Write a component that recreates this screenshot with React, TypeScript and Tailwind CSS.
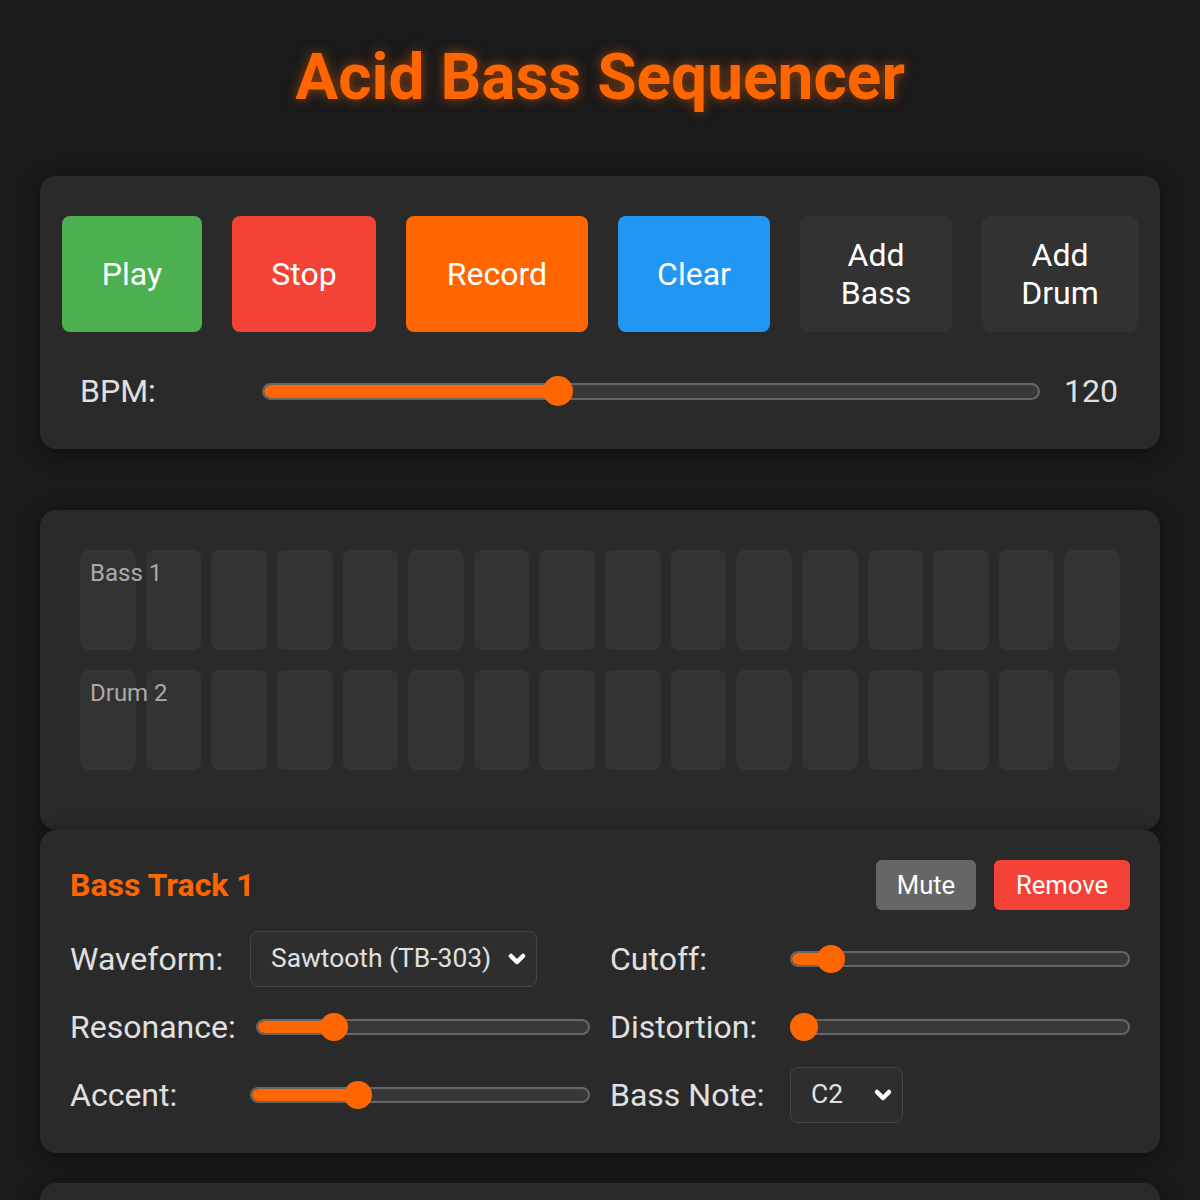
import { ChevronDown } from "lucide-react";

type SliderProps = { value: number; big?: boolean; className?: string };

// custom range look: grey outlined track, orange fill, orange knob
function Slider({ value, big = false, className = "" }: SliderProps) {
  const d = big ? 30 : 28;
  return (
    <div className={`relative flex items-center h-[30px] ${className}`}>
      <div
        className={`w-full rounded-full border-2 border-[#666] bg-[#383838] overflow-hidden ${
          big ? "h-[17px]" : "h-[16px]"
        }`}
      >
        <div
          className="h-full rounded-full bg-[#ff6600]"
          style={{ width: `calc(${value} * (100% - ${d}px) + ${d / 2}px)` }}
        />
      </div>
      <div
        className={`absolute top-1/2 -translate-y-1/2 rounded-full bg-[#ff6600] ${
          big ? "w-[30px] h-[30px]" : "w-[28px] h-[28px]"
        }`}
        style={{ left: `calc(${value} * (100% - ${d}px))` }}
      />
    </div>
  );
}

function FakeSelect({ label, width }: { label: string; width: string }) {
  return (
    <div
      className={`relative h-[56px] ${width} shrink-0 flex items-center rounded-lg border border-[#444] bg-[#2e2e2e] pl-[20px] text-[26.4px] text-[#e0e0e0]`}
    >
      {label}
      <ChevronDown className="absolute right-[7px] h-[24px] w-[24px] text-white" strokeWidth={4.5} />
    </div>
  );
}

function Control({ label, children }: { label: string; children: React.ReactNode }) {
  return (
    <div className="flex items-center gap-[20px]">
      <span className="min-w-[160px] whitespace-nowrap text-[32px] leading-[40px] text-[#e0e0e0]">{label}</span>
      {children}
    </div>
  );
}

const transport = [
  { label: "Play", w: "w-[140px]", bg: "bg-[#4caf50]" },
  { label: "Stop", w: "w-[144px]", bg: "bg-[#f44336]" },
  { label: "Record", w: "w-[182px]", bg: "bg-[#ff6600]" },
  { label: "Clear", w: "w-[152px]", bg: "bg-[#2196f3]" },
  { label: "Add Bass", w: "w-[152px]", bg: "bg-[#323232]" },
  { label: "Add Drum", w: "w-[156px]", bg: "bg-[#323232]" },
];

const rows = ["Bass 1", "Drum 2"];
const steps = Array.from({ length: 16 }, (_, i) => i);

export default function App() {
  return (
    <div className="min-h-screen bg-[#1a1a1a] px-[40px] pt-[40px] pb-[40px] font-[Roboto,sans-serif] text-[#e0e0e0]">
      <h1 className="mb-[61px] text-center text-[64px] font-bold leading-[75px] text-[#ff6600] [text-shadow:0_0_12px_rgba(255,102,0,0.55)]">
        Acid Bass Sequencer
      </h1>

      {/* Transport */}
      <div className="rounded-2xl bg-[#2a2a2a] px-[22px] pt-[40px] pb-[39px] shadow-[0_4px_20px_rgba(0,0,0,0.45)]">
        <div className="flex gap-[30px]">
          {transport.map((b) => (
            <button
              key={b.label}
              className={`${b.w} ${b.bg} rounded-lg px-[24px] py-[20px] text-[32px] leading-[38px] text-white`}
            >
              {b.label}
            </button>
          ))}
        </div>
        <div className="mt-[40px] flex h-[38px] items-center gap-[20px] pl-[18px] pr-[20px]">
          <span className="w-[162px] text-[32px]">BPM:</span>
          <Slider value={0.375} big className="flex-1" />
          <span className="ml-[4px] text-[32px]">120</span>
        </div>
      </div>

      {/* Step grid */}
      <div className="mt-[61px] rounded-2xl bg-[#2a2a2a] px-[40px] pt-[40px] pb-[40px] shadow-[0_4px_20px_rgba(0,0,0,0.45)]">
        {rows.map((name) => (
          <div key={name} className="relative mb-[20px] grid h-[100px] grid-cols-16 gap-[10px]">
            {steps.map((s) => (
              <div key={s} className="rounded-lg bg-[#333]" />
            ))}
            <span className="absolute left-[10px] top-[9px] text-[24px] leading-[28px] text-[#aaa]">{name}</span>
          </div>
        ))}
      </div>

      {/* Bass track */}
      <div className="mb-[30px] rounded-2xl bg-[#2a2a2a] p-[30px] shadow-[0_4px_20px_rgba(0,0,0,0.45)]">
        <div className="flex h-[50px] items-center justify-between">
          <h3 className="text-[32px] font-bold text-[#ff6600]">Bass Track 1</h3>
          <div className="flex gap-[18px]">
            <button className="h-[50px] w-[100px] rounded-md bg-[#666] text-[25.6px] text-white">Mute</button>
            <button className="h-[50px] w-[136px] rounded-md bg-[#f44336] text-[25.6px] text-white">Remove</button>
          </div>
        </div>
        <div className="mt-[21px] grid grid-cols-2 gap-x-[20px] gap-y-[20px]">
          <Control label="Waveform:">
            <FakeSelect label="Sawtooth (TB-303)" width="w-[287px]" />
          </Control>
          <Control label="Cutoff:">
            <Slider value={0.088} className="flex-1" />
          </Control>
          <Control label="Resonance:">
            <Slider value={0.21} className="flex-1" />
          </Control>
          <Control label="Distortion:">
            <Slider value={0} className="flex-1" />
          </Control>
          <Control label="Accent:">
            <Slider value={0.3} className="flex-1" />
          </Control>
          <Control label="Bass Note:">
            <FakeSelect label="C2" width="w-[113px]" />
          </Control>
        </div>
      </div>

      {/* next track panel, only its top edge is in view */}
      <div className="h-[80px] rounded-2xl bg-[#2a2a2a] shadow-[0_4px_20px_rgba(0,0,0,0.45)]" />
    </div>
  );
}
